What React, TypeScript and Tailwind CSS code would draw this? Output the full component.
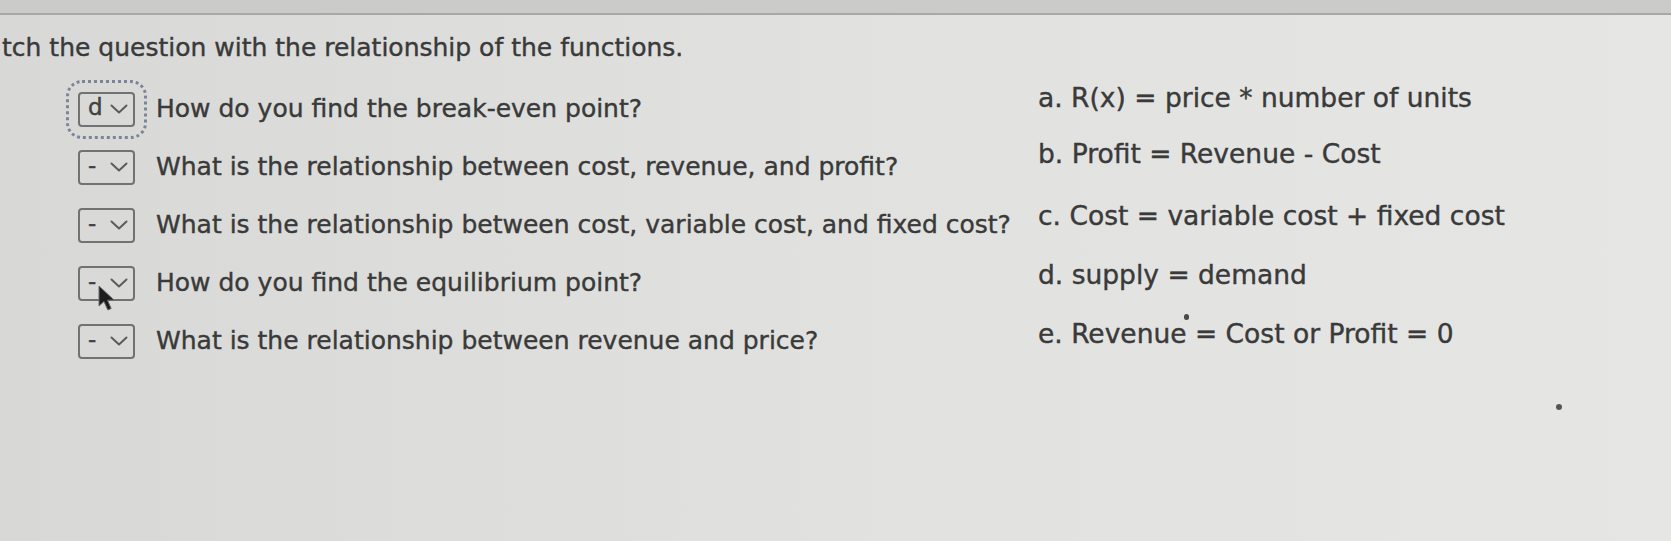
const questions = [
  { value: "d", text: "How do you find the break-even point?", focused: true },
  { value: "-", text: "What is the relationship between cost, revenue, and profit?" },
  { value: "-", text: "What is the relationship between cost, variable cost, and fixed cost?" },
  { value: "-", text: "How do you find the equilibrium point?", cursor: true },
  { value: "-", text: "What is the relationship between revenue and price?" },
]

const answers = [
  "a. R(x) = price * number of units",
  "b. Profit = Revenue - Cost",
  "c. Cost = variable cost + fixed cost",
  "d. supply = demand",
  "e. Revenue = Cost or Profit = 0",
]

function Chevron() {
  return (
    <svg width="18" height="10" viewBox="0 0 18 10" fill="none">
      <polyline points="1.5,1.5 9,8.5 16.5,1.5" stroke="#5b5b5b" strokeWidth="2" strokeLinecap="round" strokeLinejoin="round" />
    </svg>
  )
}

function Cursor() {
  return (
    <svg className="absolute left-[18px] top-[17px]" width="18" height="27" viewBox="0 0 18 27">
      <path d="M1 1 L1 21 L6 16.5 L9.8 25 L13.2 23.5 L9.5 15.2 L16 15 Z" fill="#1c1c1c" stroke="#6a6a6a" strokeWidth="1" strokeLinejoin="round" />
    </svg>
  )
}

function Select({ value, focused, cursor }: { value: string; focused?: boolean; cursor?: boolean }) {
  return (
    <div
      className={
        "relative w-[57px] h-[35px] shrink-0 border-2 border-[#727272] rounded-[4px] flex items-center justify-between pl-[8px] pr-[5px] " +
        (focused ? "outline-[3px] outline-dotted outline-[#7a859a] outline-offset-[9px]" : "")
      }
    >
      <span className="text-[23px] leading-none text-[#434343] -mt-[3px]">{value}</span>
      <Chevron />
      {cursor && <Cursor />}
    </div>
  )
}

export default function App() {
  return (
    <div className="relative min-h-screen w-full overflow-hidden bg-linear-to-r from-[#d8d9d7] via-[#e1e2e0] to-[#e6e7e5] font-['DejaVu_Sans',sans-serif] text-[#3a3a3a] [-webkit-text-stroke:0.4px_#3a3a3a]">
      <div className="h-[15px] bg-[#cbccca] border-b-2 border-[#a8a9a7]" />

      <h1 className="mt-[18px] pl-[2px] text-[25px] leading-[30px] font-normal">
        tch the question with the relationship of the functions.
      </h1>

      <div className="flex mt-[17px]">
        <ul className="w-[1038px] shrink-0 pl-[78px]">
          {questions.map((q) => (
            <li key={q.text} className="h-[58px] flex items-center gap-[21px] text-[25px]">
              <Select value={q.value} focused={q.focused} cursor={q.cursor} />
              <span>{q.text}</span>
            </li>
          ))}
        </ul>
        <ul className="-mt-[12px]">
          {answers.map((a, i) => (
            <li key={a} className={"h-[59px] flex items-center text-[26.5px] whitespace-nowrap " + (i === 1 ? "-mt-[3px] mb-[3px]" : "")}>
              {a}
            </li>
          ))}
        </ul>
      </div>

      {/* specks on the screen */}
      <span className="absolute left-[1184px] top-[314px] w-[5px] h-[6px] rounded-full bg-[#4a4a4a]" />
      <span className="absolute left-[1556px] top-[404px] w-[6px] h-[6px] rounded-full bg-[#555555]" />
    </div>
  )
}
